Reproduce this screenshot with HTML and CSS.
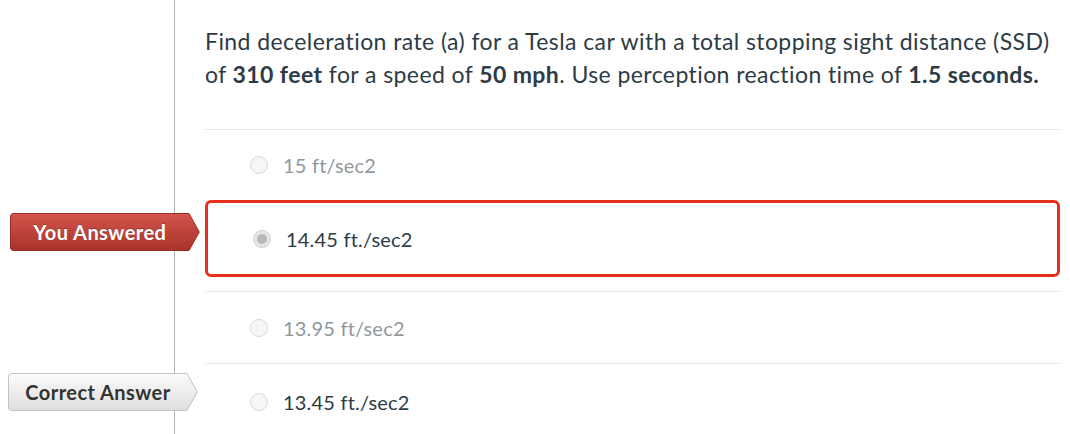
FILE: index.html
```html
<!DOCTYPE html>
<html lang="en">
<head>
<meta charset="utf-8">
<title>Quiz question</title>
<link rel="stylesheet" href="styles.css">
</head>
<body>
<div class="quiz">
  <p class="question">Find deceleration rate (a) for a Tesla car with a total stopping sight distance (SSD) of <strong>310 feet</strong> for a speed of <strong>50 mph</strong>. Use perception reaction time of <strong>1.5 seconds.</strong></p>
  <div class="answers">
    <div class="answer">
      <span class="radio"></span>
      <span class="text muted">15 ft/sec2</span>
    </div>
    <div class="answer selected">
      <div class="flag flag-wrong">
        <svg class="flag-bg" viewBox="0 0 190 38" width="190" height="38">
          <defs>
            <linearGradient id="gRed" x1="0" y1="0" x2="0" y2="1">
              <stop offset="0" stop-color="#d4554c"/>
              <stop offset="1" stop-color="#a8332a"/>
            </linearGradient>
          </defs>
          <path d="M3.5 0.5 H179 L189.3 19 L179 37.5 H3.5 Q0.5 37.5 0.5 34.5 V3.5 Q0.5 0.5 3.5 0.5 Z" fill="url(#gRed)" stroke="#9a2c24" stroke-width="1"/>
        </svg>
        <span class="flag-text">You Answered</span>
      </div>
      <span class="radio checked"></span>
      <span class="text">14.45 ft./sec2</span>
    </div>
    <div class="answer">
      <span class="radio"></span>
      <span class="text muted">13.95 ft/sec2</span>
    </div>
    <div class="answer correct">
      <div class="flag flag-right">
        <svg class="flag-bg" viewBox="0 0 190 38" width="190" height="38">
          <defs>
            <linearGradient id="gGray" x1="0" y1="0" x2="0" y2="1">
              <stop offset="0" stop-color="#fbfbfb"/>
              <stop offset="1" stop-color="#dedede"/>
            </linearGradient>
          </defs>
          <path d="M3.5 0.5 H179 L189.3 19 L179 37.5 H3.5 Q0.5 37.5 0.5 34.5 V3.5 Q0.5 0.5 3.5 0.5 Z" fill="url(#gGray)" stroke="#c2c2c2" stroke-width="1"/>
        </svg>
        <span class="flag-text">Correct Answer</span>
      </div>
      <span class="radio"></span>
      <span class="text">13.45 ft./sec2</span>
    </div>
  </div>
</div>
</body>
</html>
```
FILE: styles.css
```css
* { box-sizing: border-box; }

html, body {
  margin: 0;
  padding: 0;
  background: #ffffff;
}

body {
  font-family: Lato, "Open Sans", sans-serif;
  color: #2d3b45;
  overflow: hidden;
}

.quiz {
  margin-left: 174px;
  border-left: 1px solid #b4b4b4;
  min-height: 434px;
  padding: 25px 10px 0 30px;
}

.question {
  margin: 0 0 38px;
  font-size: 23px;
  letter-spacing: 0.42px;
  line-height: 33px;
}

.question strong {
  font-weight: 700;
}

.answer {
  position: relative;
  display: flex;
  align-items: center;
  height: 72px;
  border-top: 1px solid #e6e6e6;
  padding-left: 45px;
}

.answer:first-child {
  height: 71px;
}

.answer.selected {
  height: 77px;
  border: 3px solid #e5301f;
  border-radius: 6px;
  margin-bottom: 14px;
}

.answer.correct {
  height: 76px;
}

.radio {
  flex: none;
  width: 18px;
  height: 18px;
  border-radius: 50%;
  border: 1px solid #dadada;
  background: #f6f6f6;
  margin-right: 15px;
  position: relative;
}

.radio.checked {
  border-color: #d0d0d0;
  background: #e6e6e6;
}

.radio.checked::after {
  content: "";
  position: absolute;
  left: 3px;
  top: 3px;
  width: 10px;
  height: 10px;
  border-radius: 50%;
  background: #b8b8b8;
}

.text {
  font-size: 20px;
  letter-spacing: 0.2px;
  line-height: 24px;
  color: #2d3b45;
}

.text.muted {
  color: #8e979e;
}

.flag {
  position: absolute;
  width: 190px;
  height: 38px;
  display: flex;
  align-items: center;
}

.flag-wrong {
  left: -198px;
  top: 10px;
}

.flag-right {
  left: -197px;
  top: 9px;
}

.flag-bg {
  position: absolute;
  left: 0;
  top: 0;
}

.flag-text {
  position: relative;
  width: 180px;
  text-align: center;
  font-size: 20px;
  letter-spacing: 0.45px;
  font-weight: 700;
  line-height: 24px;
}

.flag-wrong .flag-text {
  color: #ffffff;
  text-shadow: 0 -1px 0 rgba(0, 0, 0, 0.25);
}

.flag-right .flag-text {
  color: #333333;
}
```
